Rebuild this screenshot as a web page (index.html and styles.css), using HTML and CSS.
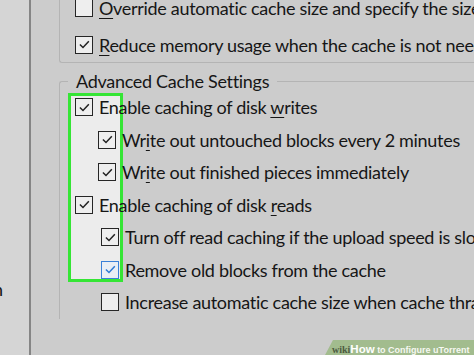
FILE: index.html
```html
<!DOCTYPE html>
<html>
<head>
<meta charset="utf-8">
<link rel="stylesheet" href="styles.css">
</head>
<body>
<div class="frame">
  <div class="side"><div class="side-text">n</div></div>
  <div class="main">
    <div class="group1">
      <div class="row">
        <span class="cb l1"></span>
        <span class="label"><u>O</u>verride automatic cache size and specify the size manually (MB):</span>
      </div>
      <div class="row">
        <span class="cb l1 on"><svg viewBox="0 0 18 18"><path d="M3.5 9 L7.2 12.6 L14.2 5.2"/></svg></span>
        <span class="label"><u>R</u>educe memory usage when the cache is not needed</span>
      </div>
    </div>
    <fieldset class="group2">
      <legend>Advanced Cache Settings</legend>
      <div class="row first">
        <span class="cb l1 on"><svg viewBox="0 0 18 18"><path d="M3.5 9 L7.2 12.6 L14.2 5.2"/></svg></span>
        <span class="label">Enable caching of disk <u>w</u>rites</span>
      </div>
      <div class="row">
        <span class="cb l2 on"><svg viewBox="0 0 18 18"><path d="M3.5 9 L7.2 12.6 L14.2 5.2"/></svg></span>
        <span class="label">Wr<u>i</u>te out untouched blocks every 2 minutes</span>
      </div>
      <div class="row">
        <span class="cb l2 on"><svg viewBox="0 0 18 18"><path d="M3.5 9 L7.2 12.6 L14.2 5.2"/></svg></span>
        <span class="label">Wr<u>i</u>te out finished pieces immediately</span>
      </div>
      <div class="row">
        <span class="cb l1 on"><svg viewBox="0 0 18 18"><path d="M3.5 9 L7.2 12.6 L14.2 5.2"/></svg></span>
        <span class="label">Enable caching of disk <u>r</u>eads</span>
      </div>
      <div class="row">
        <span class="cb l3 on"><svg viewBox="0 0 18 18"><path d="M3.5 9 L7.2 12.6 L14.2 5.2"/></svg></span>
        <span class="label">Turn off read caching if the upload speed is slow</span>
      </div>
      <div class="row">
        <span class="cb l3 on blue"><svg viewBox="0 0 18 18"><path d="M3.5 9 L7.2 12.6 L14.2 5.2"/></svg></span>
        <span class="label">Remove old blocks from the cache</span>
      </div>
      <div class="row">
        <span class="cb l3"></span>
        <span class="label">Increase automatic cache size when cache thrashing</span>
      </div>
    </fieldset>
  </div>
</div>
<div class="highlight"></div>
<div class="wm"><span class="wm-wiki">wiki</span><span class="wm-how">How</span><span class="wm-rest"> to Configure uTorrent</span></div>
</body>
</html>
```
FILE: styles.css
```css
html, body {
  margin: 0;
  padding: 0;
}
body {
  width: 474px;
  height: 355px;
  overflow: hidden;
  position: relative;
  background: #cccccc;
  font-family: Lato, "Open Sans", sans-serif;
  color: #161616;
}
.frame {
  display: flex;
  height: 355px;
}
.side {
  width: 29px;
  flex: none;
  background: #d5d5d5;
  border-right: 2px solid #858585;
}
.side-text {
  font-size: 18px;
  padding-top: 277px;
  margin-left: -7px;
  line-height: 24px;
}
.main {
  flex: 1;
  padding-left: 28px;
  position: relative;
  z-index: 1;
  white-space: nowrap;
}
.group1 {
  margin-top: -11px;
  height: 74px;
  border-left: 1px solid #b4b4b4;
  border-bottom: 1px solid #b4b4b4;
  border-bottom-left-radius: 3px;
  box-sizing: border-box;
}
.group1 .row {
  height: 37px;
}
.group2 {
  margin: 7px 0 0 0;
  padding: 0;
  border: 1px solid #b4b4b4;
  border-right: none;
  border-bottom: none;
  border-top-left-radius: 3px;
  min-width: 0;
}
.group2 legend {
  font-size: 18px;
  line-height: 22px;
  margin-left: 8px;
  padding: 0 8px;
  letter-spacing: -0.3px;
}
.row {
  display: flex;
  align-items: center;
  height: 32.5px;
  font-size: 18px;
  letter-spacing: -0.3px;
}
.row.first {
  margin-top: -1px;
}
.cb {
  flex: none;
  width: 18px;
  height: 18px;
  box-sizing: border-box;
  border: 1.6px solid #262626;
  background: #eeeeee;
  margin-right: 6px;
  display: flex;
  align-items: center;
  justify-content: center;
}
.cb svg {
  width: 15px;
  height: 15px;
  fill: none;
  stroke: #222;
  stroke-width: 1.8;
}
.cb.blue {
  border-color: #3a80d8;
  background: #e9eef5;
}
.cb.blue svg {
  stroke: #2f7ad4;
}
.l1 { margin-left: 15px; }
.l2 { margin-left: 38px; }
.l3 { margin-left: 41px; }
.label u {
  text-decoration-thickness: 1px;
  text-underline-offset: 3px;
}
.highlight {
  position: absolute;
  left: 68px;
  top: 93px;
  width: 55px;
  height: 189px;
  box-sizing: border-box;
  border: 3px solid #35e535;
  background: #ececec;
  z-index: 0;
}
.wm {
  position: absolute;
  left: 325px;
  top: 340px;
  width: 149px;
  height: 15px;
  background: #a2bc8e;
  clip-path: polygon(8px 0, 100% 0, 100% 100%, 0 100%);
  z-index: 3;
  font-family: "Liberation Sans", Arial, sans-serif;
  line-height: 15px;
  padding-left: 7px;
  box-sizing: border-box;
  white-space: nowrap;
}
.wm-wiki {
  font-family: "Liberation Serif", serif;
  font-weight: bold;
  color: #4d5b3f;
  font-size: 10px;
}
.wm-how {
  font-weight: bold;
  color: #ffffff;
  font-size: 11.5px;
}
.wm-rest {
  color: #f6f8f2;
  font-weight: bold;
  font-size: 9px;
}
```
